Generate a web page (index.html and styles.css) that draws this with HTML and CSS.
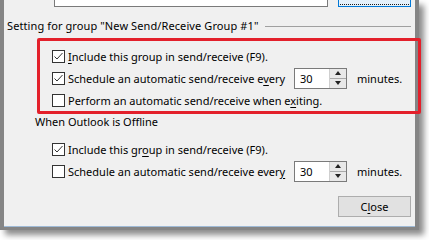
FILE: index.html
```html
<!DOCTYPE html>
<html lang="en">
  <head>
    <meta charset="UTF-8" />
    <meta name="viewport" content="width=device-width, initial-scale=1.0" />
    <title>Send/Receive Groups</title>
    <link rel="stylesheet" href="styles.css">
  </head>
  <body>
    <div class="dialog">
      <div class="dialog-body">
        <div class="top-row">
          <div class="field"></div>
          <div class="default-btn"><span class="focus"></span></div>
        </div>

        <div class="section-head">
          <span>Setting for group &quot;New Send/Receive Group #1&quot;</span>
          <span class="rule"></span>
        </div>

        <div class="highlight">
          <div class="row">
            <label class="check">
              <span class="box">
                <svg width="11" height="11" viewBox="0 0 11 11"><path d="M1.5 5.5 L4 8 L9.5 2" /></svg>
              </span>
              <span><u>I</u>nclude this group in send/receive (F9).</span>
            </label>
          </div>
          <div class="row">
            <label class="check wide">
              <span class="box">
                <svg width="11" height="11" viewBox="0 0 11 11"><path d="M1.5 5.5 L4 8 L9.5 2" /></svg>
              </span>
              <span>Schedule an automatic send/receive e<u>v</u>ery</span>
            </label>
            <div class="spin">
              <span class="spin-value">30</span>
              <span class="spin-btns">
                <span class="arrow up"></span>
                <span class="arrow down"></span>
              </span>
            </div>
            <span class="unit">minutes.</span>
          </div>
          <div class="row">
            <label class="check">
              <span class="box"></span>
              <span>Perform an automatic send/receive when e<u>x</u>iting.</span>
            </label>
          </div>
        </div>

        <div class="sub-head">When Outlook is Offline</div>

        <div class="offline">
          <div class="row">
            <label class="check">
              <span class="box">
                <svg width="11" height="11" viewBox="0 0 11 11"><path d="M1.5 5.5 L4 8 L9.5 2" /></svg>
              </span>
              <span>Include this gr<u>o</u>up in send/receive (F9).</span>
            </label>
          </div>
          <div class="row">
            <label class="check wide">
              <span class="box"></span>
              <span>Schedule an automatic send/receive ever<u>y</u></span>
            </label>
            <div class="spin">
              <span class="spin-value">30</span>
              <span class="spin-btns">
                <span class="arrow up"></span>
                <span class="arrow down"></span>
              </span>
            </div>
            <span class="unit">minutes.</span>
          </div>
        </div>

        <div class="footer">
          <button class="close">C<u>l</u>ose</button>
        </div>
      </div>
    </div>
  </body>
</html>
```

FILE: styles.css
```css
body {
  margin: 0;
  padding: 0;
  background-color: #fff;
  font-family: "Noto Sans", sans-serif;
  font-size: 11px;
  color: #000;
  width: 429px;
  height: 240px;
  overflow: hidden;
}

.dialog {
  width: 411px;
  border: 4px solid #858585;
  border-top: none;
  border-bottom-width: 3px;
  box-shadow: 5px 5px 6px rgba(0, 0, 0, 0.45);
}

.dialog-body {
  background-color: #f0f0f0;
  height: 226px;
  border-bottom: 1px solid #9fbad6;
}

.top-row {
  display: flex;
  height: 7px;
}

.field {
  width: 272px;
  margin-left: 50px;
  background-color: #fff;
  border: 1px solid #7a7a7a;
  border-top: none;
}

.default-btn {
  width: 71px;
  margin-left: 10px;
  background-color: #e5f1fb;
  border: 1px solid #0078d7;
  border-top: none;
  display: flex;
  align-items: flex-end;
}

.default-btn .focus {
  flex: 1;
  border-bottom: 1px dotted #1a1a1a;
  margin: 0 1px 1px;
}

.section-head {
  display: flex;
  align-items: center;
  gap: 6px;
  margin-top: 11px;
  padding-left: 3px;
  padding-right: 4px;
  line-height: 16px;
  letter-spacing: 0.1px;
}

.section-head .rule {
  flex: 1;
  border-top: 1px solid #a0a0a0;
}

.highlight {
  width: 366px;
  margin: 4px 0 0 33px;
  border: 3px solid #e3202b;
  border-radius: 2px;
  padding: 4px 0 0 12px;
}

.row {
  display: flex;
  align-items: center;
  height: 22px;
}

.check {
  display: flex;
  align-items: center;
  gap: 3px;
}

.check.wide {
  width: 242px;
}

.box {
  width: 11px;
  height: 11px;
  border: 1px solid #333;
  background-color: #fff;
  display: flex;
}

.box path {
  fill: none;
  stroke: #333;
  stroke-width: 1;
}

u {
  text-decoration-thickness: 1px;
  text-underline-offset: 2px;
}

.spin {
  display: flex;
  width: 51px;
  height: 19px;
  border: 1px solid #7a7a7a;
  background-color: #fff;
}

.spin-value {
  flex: 1;
  padding-left: 5px;
  line-height: 19px;
}

.spin-btns {
  width: 16px;
  display: flex;
  flex-direction: column;
  background-color: #e8e8e8;
  border-left: 1px solid #cfcfcf;
}

.arrow {
  flex: 1;
  display: flex;
  align-items: center;
  justify-content: center;
}

.arrow.up {
  border-bottom: 1px solid #a8a8a8;
}

.arrow.up::before {
  content: "";
  border-left: 3px solid transparent;
  border-right: 3px solid transparent;
  border-bottom: 4px solid #222;
}

.arrow.down::before {
  content: "";
  border-left: 3px solid transparent;
  border-right: 3px solid transparent;
  border-top: 4px solid #222;
}

.unit {
  margin-left: 10px;
}

.sub-head {
  margin-left: 31px;
  line-height: 16px;
}

.offline {
  margin: 8px 0 0 48px;
}

.footer {
  display: flex;
  justify-content: flex-end;
  margin-top: 14px;
  padding-right: 4px;
}

.close {
  width: 73px;
  height: 21px;
  padding: 0;
  font-family: inherit;
  font-size: 11px;
  color: #000;
  background-color: #e1e1e1;
  border: 1px solid #adadad;
}
```
